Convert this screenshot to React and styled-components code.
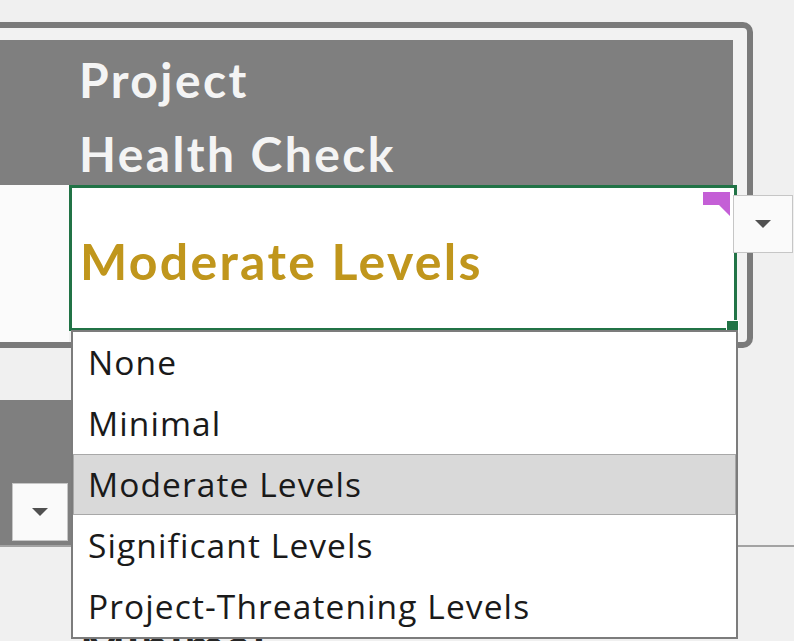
import React from "react";
import styled, { createGlobalStyle } from "styled-components";

const Global = createGlobalStyle`
  html, body { margin: 0; padding: 0; background: #f0f0f0; }
  body { font-family: "Lato", "Open Sans", sans-serif; }
  * { box-sizing: border-box; }
`;

const Page = styled.div`
  position: relative;
  width: 794px;
  height: 641px;
  overflow: hidden;
  background: #f0f0f0;
  padding-top: 22px;
`;

const Frame = styled.div`
  width: 753px;
  height: 326px;
  border: 6px solid #7a7a7a;
  border-left: none;
  border-radius: 0 10px 10px 0;
  background: #f2f2f2;
  padding-top: 12px;
`;

const Header = styled.div`
  height: 145px;
  margin-right: 14px;
  background: #7f7f7f;
  padding: 3px 0 0 79px;
  overflow: hidden;
`;

const HeaderLine = styled.div`
  font-family: "Lato", sans-serif;
  font-weight: 700;
  font-size: 48px;
  line-height: 74px;
  letter-spacing: 2.4px;
  color: #f4f4f4;
  white-space: nowrap;
`;

const CellRow = styled.div`
  display: flex;
  height: 157px;
`;

const LeftPad = styled.div`
  width: 69px;
  height: 100%;
  background: #fbfbfb;
`;

const Cell = styled.div`
  position: relative;
  width: 668px;
  height: 146px;
  border: 3px solid #217346;
  background: #ffffff;
  display: flex;
  align-items: center;
  padding: 6px 0 0 8px;
`;

const CellText = styled.span`
  font-family: "Lato", sans-serif;
  font-weight: 700;
  font-size: 50px;
  letter-spacing: 2.3px;
  color: #c0961c;
  white-space: nowrap;
`;

const CommentMark = styled.svg`
  position: absolute;
  top: 4px;
  right: 4px;
`;

const FillHandle = styled.div`
  position: absolute;
  right: -4px;
  bottom: -4px;
  width: 11px;
  height: 11px;
  background: #217346;
  outline: 1px solid #ffffff;
`;

const DropButton = styled.div`
  position: absolute;
  top: 7px;
  left: calc(100% - 1px);
  width: 60px;
  height: 58px;
  background: #fafafa;
  border: 1px solid #c6c6c6;
  display: flex;
  align-items: center;
  justify-content: center;
`;

const LeftButton = styled.div`
  width: 56px;
  height: 58px;
  background: #fafafa;
  border: 1px solid #c6c6c6;
  display: flex;
  align-items: center;
  justify-content: center;
`;

const Arrow = styled.div`
  width: 0;
  height: 0;
  border-left: 8px solid transparent;
  border-right: 8px solid transparent;
  border-top: 8px solid #505050;
`;

const SecondBlock = styled.div`
  margin-top: 52px;
  width: 733px;
  height: 145px;
  background: #7f7f7f;
  display: flex;
  align-items: flex-end;
  padding: 0 0 4px 12px;
`;

const RuleLine = styled.div`
  height: 2px;
  background: #a3a3a3;
`;

const TailText = styled.div`
  margin-top: 68px;
  padding-left: 80px;
  font-family: "Lato", sans-serif;
  font-weight: 700;
  font-size: 48px;
  line-height: 60px;
  letter-spacing: 2px;
  color: #262626;
`;

const DropList = styled.ul`
  position: absolute;
  left: 71px;
  top: 330px;
  width: 667px;
  height: 309px;
  margin: 0;
  padding: 0;
  list-style: none;
  background: #ffffff;
  border: 2px solid #7c7c7c;
`;

const Option = styled.li`
  height: 61px;
  line-height: 59px;
  padding-left: 14px;
  font-family: "Open Sans", sans-serif;
  font-size: 33.5px;
  letter-spacing: 1.1px;
  color: #1a1a1a;
  white-space: nowrap;
  border: 1px solid ${(p) => (p.$active ? "#a8a8a8" : "transparent")};
  background: ${(p) => (p.$active ? "#d9d9d9" : "transparent")};
`;

const options = [
  "None",
  "Minimal",
  "Moderate Levels",
  "Significant Levels",
  "Project-Threatening Levels",
];

export default function App() {
  return (
    <>
      <Global />
      <Page>
        <Frame>
          <Header>
            <HeaderLine>Project</HeaderLine>
            <HeaderLine>Health Check</HeaderLine>
          </Header>
          <CellRow>
            <LeftPad />
            <Cell>
              <CellText>Moderate Levels</CellText>
              <CommentMark width="27" height="24" viewBox="0 0 27 24">
                <polygon points="0,0 27,0 27,24 16,13 0,13" fill="#c45fd6" />
              </CommentMark>
              <FillHandle />
              <DropButton>
                <Arrow />
              </DropButton>
            </Cell>
          </CellRow>
        </Frame>
        <SecondBlock>
          <LeftButton>
            <Arrow />
          </LeftButton>
        </SecondBlock>
        <RuleLine />
        <TailText>Minimal</TailText>
        <DropList>
          {options.map((o) => (
            <Option key={o} $active={o === "Moderate Levels"}>
              {o}
            </Option>
          ))}
        </DropList>
      </Page>
    </>
  );
}
